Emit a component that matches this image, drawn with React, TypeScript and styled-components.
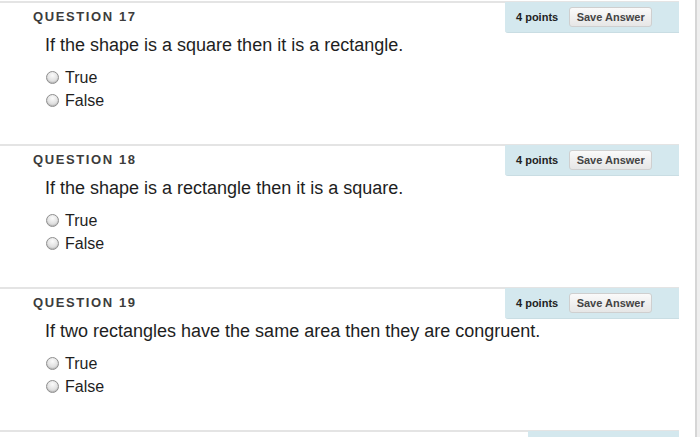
import React from 'react';
import styled, { createGlobalStyle } from 'styled-components';

interface Question {
  number: number;
  points: number;
  text: string;
  options: string[];
}

const questions: Question[] = [
  {
    number: 17,
    points: 4,
    text: 'If the shape is a square then it is a rectangle.',
    options: ['True', 'False'],
  },
  {
    number: 18,
    points: 4,
    text: 'If the shape is a rectangle then it is a square.',
    options: ['True', 'False'],
  },
  {
    number: 19,
    points: 4,
    text: 'If two rectangles have the same area then they are congruent.',
    options: ['True', 'False'],
  },
];

const GlobalStyle = createGlobalStyle`
  html, body {
    margin: 0;
    padding: 0;
    background: #ffffff;
    overflow: hidden;
  }
  body {
    font-family: "Liberation Sans", Arial, sans-serif;
    color: #1e1e1e;
  }
`;

const Page = styled.div`
  display: flex;
  height: 437px;
  overflow: hidden;
`;

const Main = styled.div`
  width: 695px;
  padding-top: 1px;
`;

const ScrollEdge = styled.div`
  flex: 1;
  border-left: 2px solid #d6d6d6;
  background: #efefef;
`;

const Block = styled.section`
  width: 679px;
  height: 143px;
  box-sizing: border-box;
  border-top: 2px solid #e4e4e4;
`;

const Header = styled.div`
  display: flex;
  justify-content: space-between;
  align-items: flex-start;
  height: 31px;
`;

const Title = styled.h3`
  margin: 0;
  padding: 6px 0 0 33px;
  font-size: 13px;
  line-height: 15px;
  font-weight: bold;
  letter-spacing: 1.6px;
  color: #3c3c3c;
`;

const Meta = styled.div<{ $width: number }>`
  display: flex;
  align-items: center;
  box-sizing: border-box;
  width: ${(p) => p.$width}px;
  height: 31px;
  margin-top: -1px;
  margin-left: auto;
  padding-left: 11px;
  gap: 11px;
  background: #d4e8ee;
  border-bottom: 1px solid #c9dde3;
  border-bottom-left-radius: 3px;
`;

const Points = styled.span`
  font-size: 11px;
  font-weight: bold;
  color: #222;
`;

const SaveButton = styled.button`
  width: 83px;
  height: 20px;
  padding: 0;
  font-family: "Liberation Sans", Arial, sans-serif;
  font-size: 11px;
  font-weight: bold;
  color: #444;
  background: linear-gradient(#fafafa, #e6e6e6);
  border: 1px solid #cfcfcf;
  border-radius: 3px;
  cursor: pointer;
`;

const Prompt = styled.p`
  margin: 0;
  padding-left: 45px;
  font-size: 18px;
  line-height: 22px;
  color: #1e1e1e;
`;

const Options = styled.div`
  display: flex;
  flex-direction: column;
  margin-top: 10px;
  padding-left: 46px;
`;

const Option = styled.label`
  display: flex;
  align-items: center;
  height: 23px;
  font-size: 16px;
  color: #1e1e1e;
  cursor: pointer;
`;

const Radio = styled.span`
  width: 13px;
  height: 13px;
  box-sizing: border-box;
  margin-right: 6px;
  border-radius: 50%;
  border: 1px solid #8e8e8e;
  background: radial-gradient(circle at 50% 30%, #fbfbfb 0%, #e2e2e2 55%, #c4c4c4 100%);
  box-shadow: inset 0 -1px 1px rgba(0, 0, 0, 0.12);
`;

const QuestionBlock = ({ q }: { q: Question }) => (
  <Block>
    <Header>
      <Title>QUESTION {q.number}</Title>
      <Meta $width={174}>
        <Points>{q.points} points</Points>
        <SaveButton>Save Answer</SaveButton>
      </Meta>
    </Header>
    <Prompt>{q.text}</Prompt>
    <Options>
      {q.options.map((o) => (
        <Option key={o}>
          <Radio />
          {o}
        </Option>
      ))}
    </Options>
  </Block>
);

// the next question starts just below the fold; only its top edge shows
const NextBlock = () => (
  <Block>
    <Header>
      <Meta $width={151} />
    </Header>
  </Block>
);

const App = () => (
  <>
    <GlobalStyle />
    <Page>
      <Main>
        {questions.map((q) => (
          <QuestionBlock key={q.number} q={q} />
        ))}
        <NextBlock />
      </Main>
      <ScrollEdge />
    </Page>
  </>
);

export default App;
